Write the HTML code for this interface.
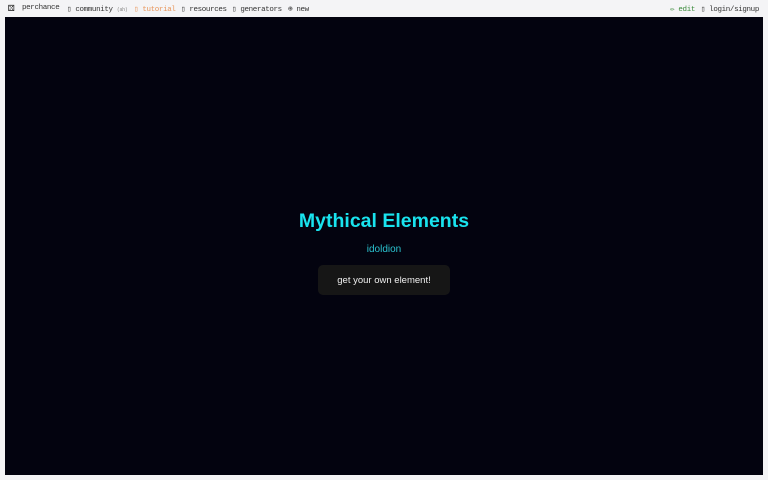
<!DOCTYPE html>
<html><head><meta charset="utf-8"><style>
html,body{margin:0;padding:0;width:768px;height:480px;background:#f4f4f6;overflow:hidden}
.bar{position:absolute;top:0;left:0;width:768px;height:17px;font-family:"Liberation Mono",monospace;font-size:7.5px;color:#333;letter-spacing:-0.35px}
.bar span{position:absolute;top:4px;white-space:nowrap}
.main{position:absolute;left:5px;top:17px;width:758px;height:458px;background:#03030f}
h1{position:absolute;left:0;width:758px;top:193px;margin:0;text-align:center;font:bold 19.5px "Liberation Sans",sans-serif;color:#19e3ee}
.sub{position:absolute;left:0;width:758px;top:227px;text-align:center;font:10px "Liberation Sans",sans-serif;color:#2bc3d0}
.btn{position:absolute;left:313px;top:248px;width:132px;height:30px;background:#161616;border-radius:5px;color:#eee;font:9.5px "Liberation Sans",sans-serif;text-align:center;line-height:31px}
</style></head><body>
<div class="bar">
<span style="left:8px;top:1px;font-size:11px;color:#111">⚄</span>
<span style="left:22px">perchance</span>
<span style="left:67px">▯ community <small style="font-size:5px;color:#888">(ah)</small></span>
<span style="left:134px;color:#e8955a">▯ tutorial</span>
<span style="left:181px">▯ resources</span>
<span style="left:232px">▯ generators</span>
<span style="left:288px">⊕ new</span>
<span style="right:73px;color:#3a8a3a">✏ edit</span>
<span style="right:9px">▯ login/signup</span>
</div>
<div class="main">
<h1>Mythical Elements</h1>
<div class="sub">idoldion</div>
<div class="btn">get your own element!</div>
</div>
</body></html>
